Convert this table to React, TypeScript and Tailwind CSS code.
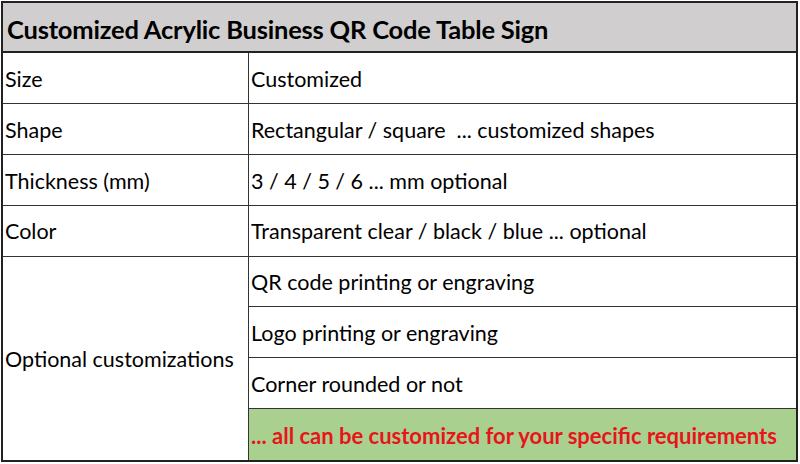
export default function App() {
  const rows = [
    { label: "Size", value: "Customized" },
    { label: "Shape", value: "Rectangular / square  ... customized shapes" },
    { label: "Thickness (mm)", value: "3 / 4 / 5 / 6 ... mm optional" },
    { label: "Color", value: "Transparent clear / black / blue ... optional" },
  ];
  const options = [
    "QR code printing or engraving",
    "Logo printing or engraving",
    "Corner rounded or not",
  ];

  return (
    <div className="w-[800px] h-[464px] bg-white p-px font-['Lato',sans-serif] text-[21.5px] text-black whitespace-pre">
      <div className="w-[797px] h-[461px] border-2 border-[#222] flex flex-col">
        <div className="h-[50px] bg-[#d0cece] border-b-2 border-[#222] flex items-center px-[4px] pt-[4px]">
          <span className="font-bold text-[25.5px] tracking-[-0.2px]">
            Customized Acrylic Business QR Code Table Sign
          </span>
        </div>
        <div className="flex-1 grid grid-cols-[246px_1fr] grid-rows-8">
          {rows.map((r) => (
            <div key={r.label} className="contents">
              <div className="border-b border-r border-[#333] flex items-center px-[2px] pt-[2px]">
                {r.label}
              </div>
              <div className="border-b border-[#333] flex items-center px-[2px] pt-[2px]">
                {r.value}
              </div>
            </div>
          ))}
          <div className="row-span-4 border-r border-[#333] flex items-center px-[2px] pt-[2px]">
            Optional customizations
          </div>
          {options.map((o) => (
            <div key={o} className="border-b border-[#333] flex items-center px-[2px] pt-[2px]">
              {o}
            </div>
          ))}
          <div className="bg-[#a9d08e] flex items-center px-[2px] pt-[2px] font-bold text-[22px] text-[#e8141b]">
            ... all can be customized for your specific requirements
          </div>
        </div>
      </div>
    </div>
  );
}
